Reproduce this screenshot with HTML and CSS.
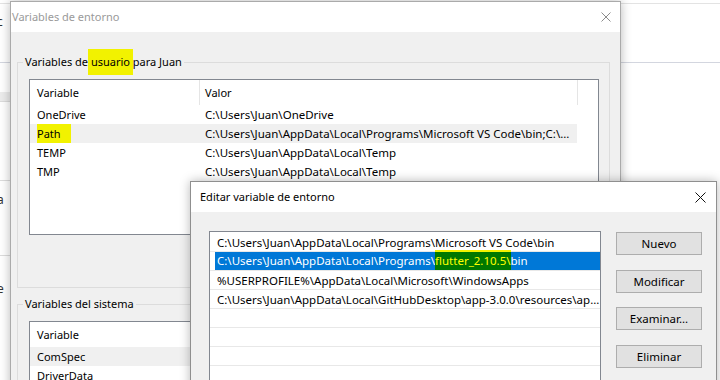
FILE: index.html
```html
<!DOCTYPE html>
<html lang="es">
<head>
<meta charset="utf-8">
<title>Variables de entorno</title>
<link rel="stylesheet" href="styles.css">
</head>
<body>
<div class="bg-win">
  <div class="bg-head"><span class="bg-frag">c</span></div>
  <div class="bg-side">
    <div class="bg-band"></div>
    <div class="bg-frag bg-f1">i</div>
    <div class="bg-line"></div>
    <div class="bg-frag bg-f2">a</div>
    <div class="bg-line bg-l2"></div>
    <div class="bg-frag bg-f3">e</div>
  </div>
</div>

<div class="win win-main">
  <div class="titlebar">
    <span class="title">Variables de entorno</span>
    <svg class="close" width="10" height="10" viewBox="0 0 10 10"><path d="M0.5 0.5L9.5 9.5M9.5 0.5L0.5 9.5"/></svg>
  </div>
  <div class="wbody">
    <fieldset class="group group-user">
      <legend>Variables de <span class="hl-usuario">usuario</span> para Juan</legend>
      <div class="list">
        <div class="lhead"><div class="h1">Variable</div><div class="h2">Valor</div></div>
        <div class="row"><div class="c1">OneDrive</div><div class="c2">C:\Users\Juan\OneDrive</div></div>
        <div class="row row-sel"><div class="c1"><span class="hl-path">Path</span></div><div class="c2">C:\Users\Juan\AppData\Local\Programs\Microsoft VS Code\bin;C:\...</div></div>
        <div class="row"><div class="c1">TEMP</div><div class="c2">C:\Users\Juan\AppData\Local\Temp</div></div>
        <div class="row"><div class="c1">TMP</div><div class="c2">C:\Users\Juan\AppData\Local\Temp</div></div>
      </div>
    </fieldset>
    <fieldset class="group group-sys">
      <legend>Variables del sistema</legend>
      <div class="list list-sys">
        <div class="lhead"><div class="h1">Variable</div><div class="h2">Valor</div></div>
        <div class="row row-sel"><div class="c1">ComSpec</div><div class="c2">C:\Windows\system32\cmd.exe</div></div>
        <div class="row"><div class="c1">DriverData</div><div class="c2">C:\Windows\System32\Drivers\DriverData</div></div>
      </div>
    </fieldset>
  </div>
</div>

<div class="win win-edit">
  <div class="titlebar">
    <span class="title">Editar variable de entorno</span>
    <svg class="close" width="11" height="11" viewBox="0 0 11 11"><path d="M0.5 0.5L10.5 10.5M10.5 0.5L0.5 10.5"/></svg>
  </div>
  <div class="ebody">
    <div class="elist">
      <div class="erow"><span class="etext">C:\Users\Juan\AppData\Local\Programs\Microsoft VS Code\bin</span></div>
      <div class="erow erow-sel"><span class="etext">C:\Users\Juan\AppData\Local\Programs\<span class="hl-flutter">flutter_2.10.5\</span>bin</span></div>
      <div class="erow"><span class="etext">%USERPROFILE%\AppData\Local\Microsoft\WindowsApps</span></div>
      <div class="erow"><span class="etext">C:\Users\Juan\AppData\Local\GitHubDesktop\app-3.0.0\resources\ap...</span></div>
      <div class="erow"></div>
      <div class="erow"></div>
      <div class="erow"></div>
      <div class="erow"></div>
    </div>
    <div class="buttons">
      <button class="btn">Nuevo</button>
      <button class="btn">Modificar</button>
      <button class="btn">Examinar...</button>
      <button class="btn">Eliminar</button>
    </div>
  </div>
</div>
</body>
</html>
```
FILE: styles.css
```css
* { box-sizing: border-box; }
html, body { margin: 0; padding: 0; }
body {
  width: 720px;
  height: 380px;
  overflow: hidden;
  position: relative;
  background: #fff;
  font-family: "Noto Sans", "Segoe UI", sans-serif;
  font-size: 11px;
  color: #000;
}

/* background window */
.bg-win {
  position: absolute;
  left: 0;
  top: 3px;
  width: 720px;
  height: 377px;
  border-top: 1px solid #e3e3e3;
}
.bg-head {
  height: 59px;
  border-bottom: 1px solid #d3d6df;
  padding-top: 10px;
}
.bg-frag { display: block; width: 10px; margin-left: -3px; color: #333; font-size: 12px; line-height: 14px; }
.bg-head .bg-frag { display: inline-block; }
.bg-side { width: 10px; }
.bg-band { margin-top: 29px; height: 10px; background: #ececec; border-bottom: 1px solid #dcdcdc; }
.bg-f1 { margin-top: 52px; }
.bg-line { margin-top: 12px; height: 1px; background: #dcdcdc; }
.bg-f2 { margin-top: 12px; }
.bg-l2 { margin-top: 48px; }
.bg-f3 { margin-top: 26px; }

/* windows */
.win {
  position: absolute;
  background: #f0f0f0;
  box-shadow: 0 0 10px rgba(0, 0, 0, 0.28);
}
.titlebar {
  height: 30px;
  background: #fff;
  display: flex;
  align-items: center;
  justify-content: space-between;
}
.title { font-size: 11px; line-height: 16px; }
.close path { fill: none; stroke-width: 1; }

.win-main {
  left: 10px;
  top: 1px;
  width: 611px;
  height: 420px;
  border: 1px solid #aaaaaa;
}
.win-main .titlebar { padding: 0 9px 0 1px; }
.win-main .title { color: #9a9a9a; }
.win-main .close path { stroke: #8c8c8c; }

.group {
  margin: 0 10px 0 6px;
  border: 1px solid #dcdcdc;
  padding: 9px 10px 52px 11px;
  min-width: 0;
}
.group legend {
  padding: 0 2px;
  margin-left: -6px;
  line-height: 16px;
  font-size: 11px;
}
.group-user { margin-top: 22px; }
.group-sys { margin-top: 8px; }

.hl-usuario {
  background: #f2f200;
  padding: 5px 3px 6px;
  margin: 0 -3px;
}

.list {
  height: 156px;
  border: 1px solid #828790;
  background: #fff;
  overflow: hidden;
  font-size: 11px;
}
.list-sys { height: 120px; }
.lhead { display: flex; height: 25px; }
.h1, .h2 {
  display: flex;
  align-items: center;
  border-right: 1px solid #e5e5e5;
}
.h1 { width: 170px; padding-left: 7px; }
.h2 { width: 378px; padding-left: 5px; }
.row {
  display: flex;
  width: 547px;
  height: 19px;
  line-height: 19px;
  white-space: nowrap;
}
.row-sel { background: #f0f0f0; }
.c1 { width: 170px; padding-left: 7px; }
.c2 { width: 377px; padding-left: 5px; overflow: hidden; font-size: 11.5px; }
.hl-path {
  display: inline-block;
  background: #f2f200;
  padding-right: 10px;
  line-height: 19px;
}

/* edit dialog */
.win-edit {
  left: 190px;
  top: 181px;
  width: 527px;
  height: 220px;
  border: 1px solid #8f8f8f;
}
.win-edit .titlebar { padding: 0 10px 0 9px; }
.win-edit .close path { stroke: #111; }
.ebody {
  display: flex;
  gap: 15px;
  padding: 19px 0 0 18px;
}
.elist {
  width: 392px;
  height: 200px;
  border: 1px solid #828790;
  background: #fff;
  padding-top: 1px;
  font-size: 11.5px;
}
.erow {
  height: 19px;
  border-bottom: 1px solid #e8e8e8;
  white-space: nowrap;
  overflow: hidden;
}
.etext { display: block; padding-left: 7px; line-height: 19px; }
.erow-sel { overflow: visible; }
.erow-sel .etext {
  margin-left: 5px;
  padding-left: 2px;
  background: #0078d7;
  color: #fff;
  line-height: 18px;
}
.hl-flutter {
  display: inline-block;
  background: #007800;
  color: #ffff00;
  line-height: 18px;
  box-shadow: 0 -2px 0 #f2f200;
}

.buttons {
  display: flex;
  flex-direction: column;
  gap: 14.5px;
  padding-top: 1px;
}
.btn {
  width: 86px;
  height: 23px;
  background: #e1e1e1;
  border: 1px solid #adadad;
  font-family: inherit;
  font-size: 11.5px;
  color: #000;
  padding: 0;
}
```
